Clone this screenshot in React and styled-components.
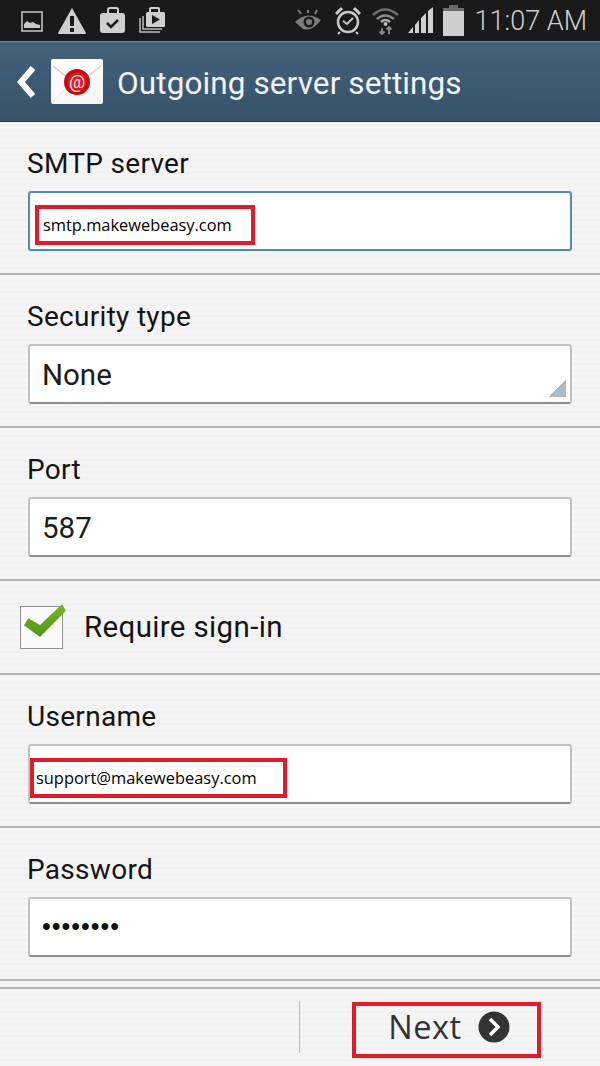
import React from 'react'
import styled, { createGlobalStyle } from 'styled-components'

const Global = createGlobalStyle`
  html, body { margin: 0; padding: 0; background: #f4f4f4; }
  * { box-sizing: border-box; }
`

const Screen = styled.div`
  width: 600px;
  height: 1066px;
  overflow: hidden;
  display: flex;
  flex-direction: column;
  font-family: Roboto, "Liberation Sans", sans-serif;
  background: repeating-linear-gradient(180deg, #f5f5f5 0, #f5f5f5 3px, #f2f2f2 3px, #f2f2f2 6px);
`

const StatusBar = styled.div`
  height: 41px;
  flex: none;
  background: #1a1a1a;
  display: flex;
  align-items: center;
  justify-content: space-between;
  padding: 0 13px 0 21px;
`

const IconRow = styled.div`
  display: flex;
  align-items: center;
  gap: ${p => p.$gap || 9}px;
`

const Clock = styled.span`
  font-size: 27px;
  font-weight: 300;
  color: #cfcfcf;
  margin-left: 2px;
`

const ActionBar = styled.div`
  height: 81px;
  flex: none;
  display: flex;
  align-items: center;
  padding: 0 0 0 16px;
  background: linear-gradient(180deg, #44627a 0%, #3d5a72 50%, #375268 100%);
  border-top: 1px solid #6f8ba0;
  border-bottom: 1px solid #2c3e4d;
`

const Title = styled.h1`
  margin: 3px 0 0 14px;
  font-size: 31.5px;
  font-weight: 400;
  color: #f2f5f7;
  letter-spacing: 0.1px;
`

const LogoTile = styled.div`
  width: 52px;
  height: 45px;
  margin-left: 15px;
  background: linear-gradient(180deg, #ffffff, #f7f7f7);
  border-radius: 2px;
  flex: none;
`

const Section = styled.section`
  height: 153px;
  flex: none;
  padding: 26px 28px 0;
  border-bottom: 2px solid #b4b4b4;
`

const Label = styled.div`
  font-size: 28px;
  line-height: 32px;
  color: #141414;
  letter-spacing: 0.3px;
  margin: 0 0 11px -1px;
`

const Field = styled.div`
  position: relative;
  height: 60px;
  background: #fff;
  border-radius: 3px;
  border: 2px solid ${p => (p.$focus ? '#4f8abd' : '#c2c2c2')};
  border-bottom-color: ${p => (p.$focus ? '#4f8abd' : '#8e8e8e')};
  padding: 1px 0 0 12px;
  display: flex;
  align-items: center;
  font-size: 29.5px;
  color: #1c1c1c;
`

const Mask = styled.span`
  font-family: "Liberation Sans", sans-serif;
  font-size: 25px;
  letter-spacing: 1px;
  color: #111;
  margin-bottom: 2px;
`

const Arrow = styled.span`
  position: absolute;
  right: 4px;
  bottom: 5px;
  width: 18px;
  height: 18px;
  background: linear-gradient(135deg, transparent 50%, #a8bccf 50%);
`

const Note = styled.span`
  position: absolute;
  left: ${p => p.$left}px;
  top: 12px;
  width: ${p => p.$w}px;
  height: 40px;
  border: 4px solid #e01b2a;
  background: #fff;
  display: flex;
  align-items: center;
  padding: 0 0 2px ${p => p.$pad}px;
  font-family: "Open Sans", "Noto Sans", sans-serif;
  font-size: 16.4px;
  color: #000;
`

const CheckRow = styled.div`
  height: 94px;
  flex: none;
  display: flex;
  align-items: center;
  padding: 0 0 0 20px;
  border-bottom: 2px solid #b4b4b4;
`

const CheckBox = styled.div`
  position: relative;
  width: 43px;
  height: 43px;
  background: #fbfbfb;
  border: 1px solid #8f8f8f;
  flex: none;
  margin-right: 21px;
`

const CheckMark = styled.svg`
  position: absolute;
  left: 3px;
  top: -6px;
`

const CheckText = styled.span`
  font-size: 29.5px;
  color: #141414;
  letter-spacing: 0.35px;
`

const Footer = styled.div`
  margin-top: 6px;
  flex: 1;
  border-top: 2px solid #b4b4b4;
  display: flex;
  align-items: flex-start;
  justify-content: flex-end;
  padding-top: 12px;
`

const Divider = styled.div`
  width: 1px;
  height: 52px;
  background: #b8b8b8;
`

const NextBox = styled.div`
  width: 300px;
  height: 52px;
  display: flex;
  justify-content: center;
  align-items: center;
  position: relative;
`

const NextOutline = styled.span`
  position: absolute;
  left: 52px;
  top: 1px;
  width: 189px;
  height: 56px;
  border: 4px solid #e01b2a;
`

const NextLabel = styled.span`
  font-size: 32.5px;
  color: #333;
  margin: 0 16px 0 -2px;
  padding-bottom: 2px;
  letter-spacing: 0.5px;
  font-family: "Open Sans", "Noto Sans", sans-serif;
`

const NextCircle = styled.svg`
  flex: none;
`

const StatusIcons = () => (
  <IconRow $gap={9}>
    <svg width="22" height="24" viewBox="0 0 22 24">
      <rect x="1" y="3" width="20" height="19" fill="none" stroke="#c8c8c8" strokeWidth="1.5" />
      <path d="M3 19 v-4 l3-3 3 2 3-1 3 2 4 1 v3z" fill="#c8c8c8" />
    </svg>
    <svg width="30" height="28" viewBox="0 0 30 28" style={{ marginLeft: 5 }}>
      <path d="M15 1 L29 26 Q29 27 28 27 H2 Q1 27 1 26z" fill="#cfcfcf" />
      <rect x="13" y="9" width="4" height="10" fill="#1a1a1a" />
      <rect x="13" y="21" width="4" height="4" fill="#1a1a1a" />
    </svg>
    <svg width="27" height="27" viewBox="0 0 27 27" style={{ marginLeft: 3 }}>
      <path d="M9 6 V3 Q9 1 11 1 H17 Q19 1 19 3 V6" fill="none" stroke="#cfcfcf" strokeWidth="2" />
      <rect x="1" y="6" width="25" height="20" rx="3" fill="#cfcfcf" />
      <path d="M8 16 l4 4 7-7" fill="none" stroke="#1a1a1a" strokeWidth="2.5" />
    </svg>
    <svg width="27" height="27" viewBox="0 0 27 27" style={{ marginLeft: 4 }}>
      <path d="M1 11 V25 H21" fill="none" stroke="#bdbdbd" strokeWidth="1.5" />
      <path d="M4 9 V22 H23" fill="none" stroke="#bdbdbd" strokeWidth="1.5" />
      <path d="M11 5 V2 Q11 1 12 1 H19 Q20 1 20 2 V5" fill="none" stroke="#cfcfcf" strokeWidth="2" />
      <rect x="7" y="5" width="19" height="15" rx="1.5" fill="#cfcfcf" />
      <path d="M13 8 L21 12.5 L13 17z" fill="#1a1a1a" />
    </svg>
  </IconRow>
)

const SystemIcons = () => (
  <IconRow $gap={9}>
    <svg width="29" height="24" viewBox="0 0 29 24" style={{ marginRight: 2 }}>
      <path d="M1 13 Q13 1 27 11 Q18 23 9 20z" fill="#7c7c7c" />
      <circle cx="15" cy="13" r="5.5" fill="#1a1a1a" />
      <circle cx="15" cy="13" r="3" fill="#7c7c7c" />
      <path d="M7 5 L4 1 M14 4 V1 M21 5 L23 1" stroke="#7c7c7c" strokeWidth="2" />
    </svg>
    <svg width="28" height="29" viewBox="0 0 28 29" style={{ marginRight: 1 }}>
      <circle cx="14" cy="16" r="10" fill="none" stroke="#c8c8c8" strokeWidth="2.5" />
      <path d="M9 15 l4 3 6-6" fill="none" stroke="#c8c8c8" strokeWidth="2" />
      <path d="M2 8 L8 2 M26 8 L20 2" stroke="#c8c8c8" strokeWidth="3" />
      <path d="M6 26 L4 28 M22 26 L24 28" stroke="#c8c8c8" strokeWidth="2" />
    </svg>
    <svg width="27" height="29" viewBox="0 0 27 29">
      <path d="M1 9 Q13 -2 26 9" fill="none" stroke="#6e6e6e" strokeWidth="2.5" />
      <path d="M5 13 Q13 6 22 13" fill="none" stroke="#8a8a8a" strokeWidth="2.5" />
      <path d="M9 16 Q13 12 18 16" fill="none" stroke="#a8a8a8" strokeWidth="2.5" />
      <circle cx="13.5" cy="18" r="2" fill="#bdbdbd" />
      <path d="M10 22 V28 M7.5 25.5 L10 28 L12.5 25.5" fill="none" stroke="#8a8a8a" strokeWidth="1.8" />
      <path d="M17 28 V21 M14.5 23.5 L17 21 L19.5 23.5" fill="none" stroke="#8a8a8a" strokeWidth="1.8" />
    </svg>
    <svg width="27" height="27" viewBox="0 0 27 27" style={{ marginLeft: -1 }}>
      <path d="M1 26 L6 20 V26z M8 18 L12 13 V26 H8z M14 11 L19 6 V26 H14z M21 4 L26 0 V26 H21z" fill="#cfcfcf" />
    </svg>
    <svg width="21" height="31" viewBox="0 0 21 31">
      <rect x="6" y="0" width="9" height="3" fill="#6a6a6a" />
      <rect x="0" y="3" width="21" height="3" fill="#6a6a6a" />
      <rect x="0" y="6" width="21" height="25" fill="#cfcfcf" />
    </svg>
    <Clock>11:07 AM</Clock>
  </IconRow>
)

const MailLogo = () => (
  <LogoTile>
    <svg width="52" height="45" viewBox="0 0 52 45">
      <path d="M2 7 L26 26 L50 7" fill="none" stroke="#cfcfcf" strokeWidth="1.2" />
      <path d="M2 43 L20 24 M50 43 L32 24" fill="none" stroke="#e8e8e8" strokeWidth="1" />
      <circle cx="26" cy="23" r="13" fill="#c70a12" />
      <circle cx="26" cy="23" r="9.5" fill="#e2161c" />
      <text x="26" y="29" textAnchor="middle" fontFamily="Roboto, sans-serif" fontSize="18" fill="#fde8e8">@</text>
    </svg>
  </LogoTile>
)

export default function App() {
  return (
    <Screen>
      <Global />
      <StatusBar>
        <StatusIcons />
        <SystemIcons />
      </StatusBar>
      <ActionBar>
        <svg width="20" height="34" viewBox="0 0 20 34">
          <path d="M17 3 L5 17 L17 31" fill="none" stroke="#fff" strokeWidth="6" />
        </svg>
        <MailLogo />
        <Title>Outgoing server settings</Title>
      </ActionBar>

      <Section>
        <Label>SMTP server</Label>
        <Field $focus>
          <Note $left={5} $w={220} $pad={4}>smtp.makewebeasy.com</Note>
        </Field>
      </Section>

      <Section>
        <Label>Security type</Label>
        <Field>
          None
          <Arrow />
        </Field>
      </Section>

      <Section>
        <Label>Port</Label>
        <Field>587</Field>
      </Section>

      <CheckRow>
        <CheckBox>
          <CheckMark width="46" height="42" viewBox="0 0 46 42">
            <defs>
              <linearGradient id="tick" x1="0" y1="0" x2="0" y2="1">
                <stop offset="0" stopColor="#79b52c" />
                <stop offset="1" stopColor="#4f9512" />
              </linearGradient>
            </defs>
            <path d="M0 24.3 L16 36 L41.7 10 L38.3 3 L16 24 L4.3 17.3z" fill="url(#tick)" />
          </CheckMark>
        </CheckBox>
        <CheckText>Require sign-in</CheckText>
      </CheckRow>

      <Section>
        <Label>Username</Label>
        <Field>
          <Note $left={0} $w={257} $pad={2}>support@makewebeasy.com</Note>
        </Field>
      </Section>

      <Section>
        <Label>Password</Label>
        <Field>
          <Mask>••••••••</Mask>
        </Field>
      </Section>

      <Footer>
        <Divider />
        <NextBox>
          <NextOutline />
          <NextLabel>Next</NextLabel>
          <NextCircle width="32" height="32" viewBox="0 0 32 32">
            <circle cx="16" cy="16" r="15.5" fill="#333" />
            <path d="M12 8 L20 16 L12 24" fill="none" stroke="#fff" strokeWidth="3.5" />
          </NextCircle>
        </NextBox>
      </Footer>
    </Screen>
  )
}
